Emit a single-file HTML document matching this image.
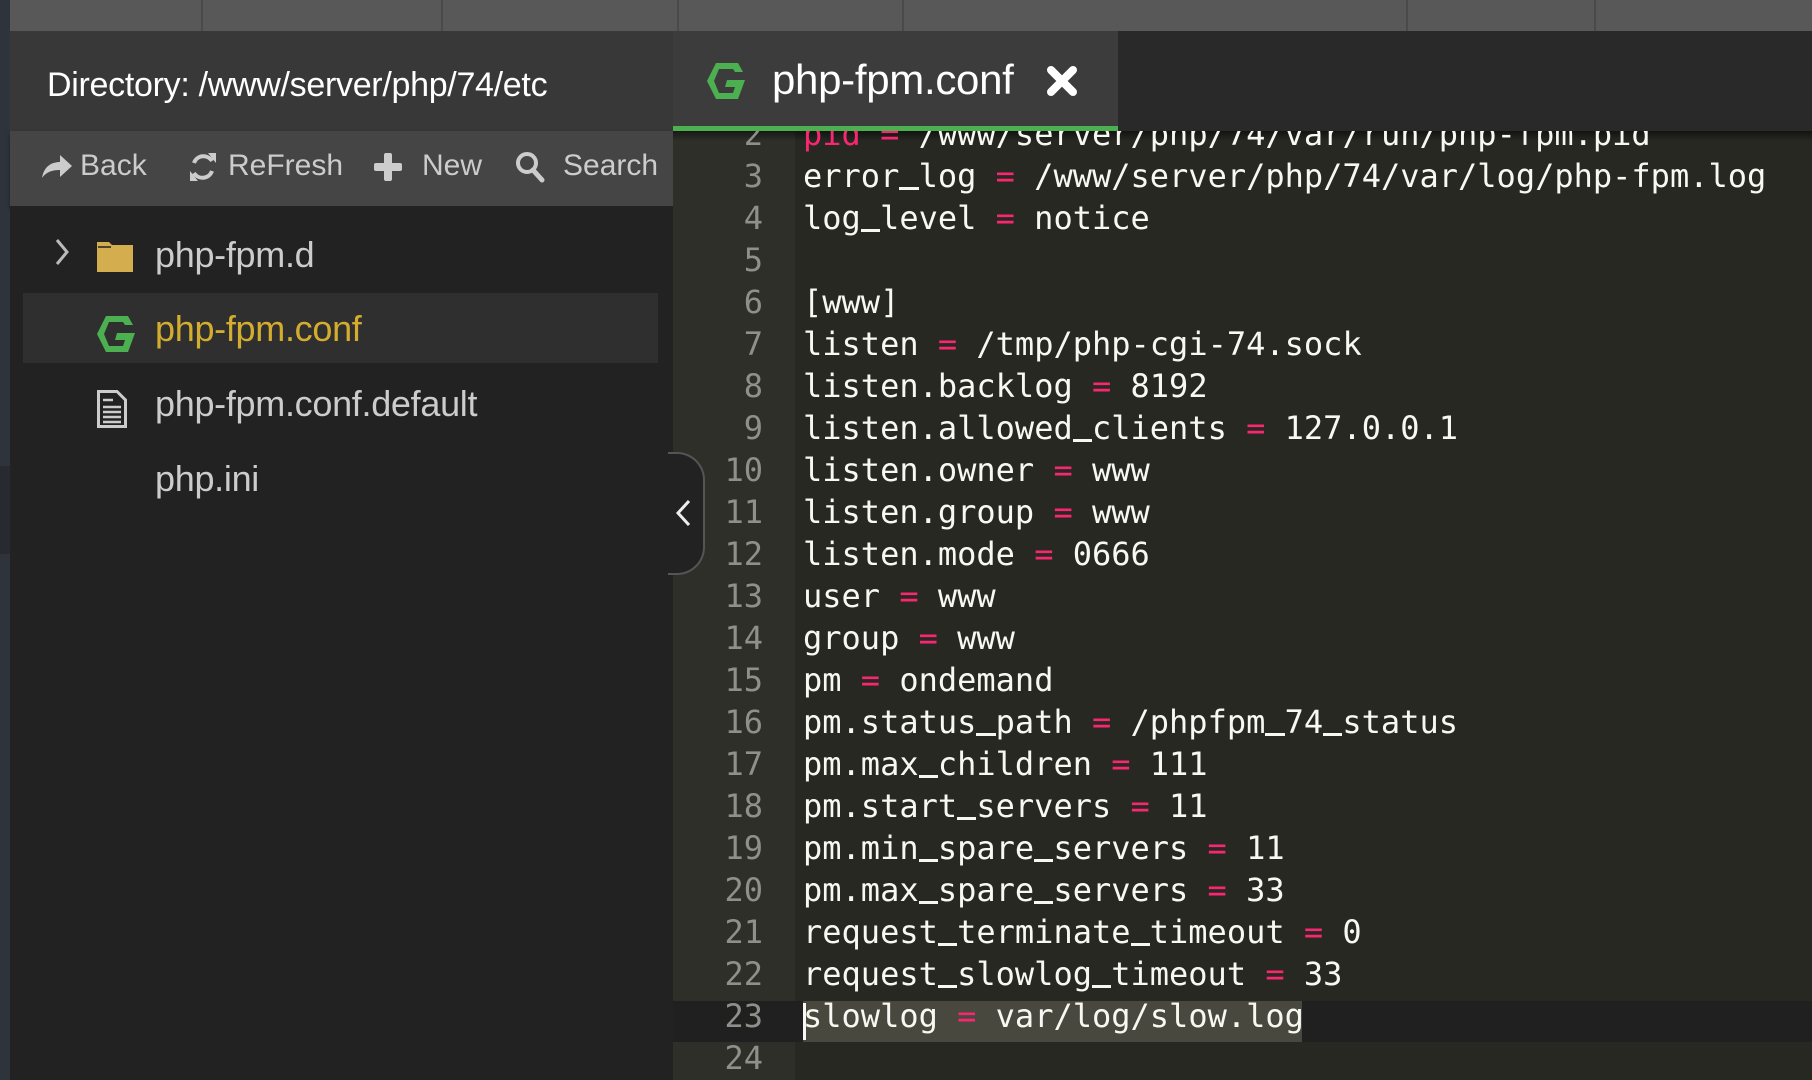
<!DOCTYPE html>
<html><head><meta charset="utf-8"><style>
*{margin:0;padding:0;box-sizing:border-box}
body{width:1812px;height:1080px;overflow:hidden;background:#222;position:relative;font-family:"Liberation Sans",sans-serif}
.abs{position:absolute}
.mono{font-family:"DejaVu Sans Mono","Liberation Mono",monospace}
.code div{height:42px;line-height:42px;white-space:pre;font-size:32px;color:#f8f8f2}
.gut div{height:42px;line-height:42px;font-size:32px;color:#8f908a;text-align:right}
.p{color:#f92672}
.u{display:inline-block;width:0.602em;height:42px;vertical-align:top;position:relative;color:transparent;overflow:hidden}
.u::after{content:"";position:absolute;left:0;right:0;top:32px;height:3px;background:#f8f8f2}
</style></head><body>
<!-- top bar -->
<div class="abs" style="left:0;top:0;width:1812px;height:31px;background:#585858"></div>
<div class="abs" style="left:0;top:0;width:10px;height:1080px;background:#2f333b"></div>
<div class="abs" style="left:0;top:466px;width:10px;height:88px;background:#272b31"></div>
<div class="abs" style="left:201px;top:0;width:2px;height:31px;background:#4a4a4a"></div>
<div class="abs" style="left:441px;top:0;width:2px;height:31px;background:#4a4a4a"></div>
<div class="abs" style="left:677px;top:0;width:2px;height:31px;background:#4a4a4a"></div>
<div class="abs" style="left:902px;top:0;width:2px;height:31px;background:#4a4a4a"></div>
<div class="abs" style="left:1406px;top:0;width:2px;height:31px;background:#4a4a4a"></div>
<div class="abs" style="left:1594px;top:0;width:2px;height:31px;background:#4a4a4a"></div>

<!-- left panel -->
<div class="abs" style="left:10px;top:31px;width:663px;height:100px;background:#383838"></div>
<div class="abs" style="left:47px;top:66px;font-size:34px;color:#fff;letter-spacing:-0.3px">Directory: /www/server/php/74/etc</div>
<div class="abs" style="left:10px;top:131px;width:663px;height:75px;background:#454545;box-shadow:0 3px 4px rgba(0,0,0,.4)"></div>
<div class="abs" style="left:10px;top:131px;width:663px;height:75px;color:#ccc;font-size:30px">
 <svg class="abs" style="left:32px;top:23px" width="30" height="26" viewBox="0 0 30 26"><path d="M0 24 C2 12 10 8 18 8 L18 1 L30 12 L18 23 L18 16 C10 16 4 18 0 24Z" fill="#ccc"/></svg>
 <div class="abs" style="left:70px;top:18px">Back</div>
 <svg class="abs" style="left:178px;top:20px" width="30" height="32" viewBox="0 0 30 32"><path d="M24 10 A10 10 0 0 0 6 12" stroke="#ccc" stroke-width="4" fill="none"/><path d="M20 2 L28 2 L28 12 Z" fill="#ccc"/><path d="M6 22 A10 10 0 0 0 24 20" stroke="#ccc" stroke-width="4" fill="none"/><path d="M10 30 L2 30 L2 20 Z" fill="#ccc"/></svg>
 <div class="abs" style="left:218px;top:18px">ReFresh</div>
 <svg class="abs" style="left:364px;top:22px" width="28" height="28"><rect x="10" y="0" width="8" height="28" rx="2" fill="#ccc"/><rect x="0" y="10" width="28" height="8" rx="2" fill="#ccc"/></svg>
 <div class="abs" style="left:412px;top:18px">New</div>
 <svg class="abs" style="left:505px;top:20px" width="30" height="32"><circle cx="12" cy="12" r="9" stroke="#ccc" stroke-width="4" fill="none"/><path d="M18 19 L27 29" stroke="#ccc" stroke-width="5" stroke-linecap="round"/></svg>
 <div class="abs" style="left:553px;top:18px">Search</div>
</div>
<div class="abs" style="left:10px;top:206px;width:663px;height:874px;background:#222"></div>
<svg class="abs" style="left:54px;top:238px" width="16" height="28"><path d="M3 2 L13 14 L3 26" stroke="#bbb" stroke-width="3" fill="none"/></svg>
<svg class="abs" style="left:97px;top:240px" width="36" height="32"><path d="M0 2 H12 L15 5 H36 V32 H0Z" fill="#d4ad4e"/><path d="M1 7 H14" stroke="#222" stroke-width="1.5"/></svg>
<div class="abs" style="left:155px;top:234px;font-size:36px;color:#ccc;letter-spacing:-0.3px">php-fpm.d</div>
<div class="abs" style="left:23px;top:293px;width:635px;height:70px;background:#2f2f2f"></div>
<svg class="abs" style="left:97px;top:316px" width="38" height="36" viewBox="0 0 38 36"><path d="M9 0 H31 L36 9 H28 L26 6 H12 L7 18 L12 30 H26 L28 24 H18 L20 17 H38 L31 36 H9 L0 18Z" fill="#4caf50"/></svg>
<div class="abs" style="left:155px;top:308px;font-size:36px;color:#d4ad2e;letter-spacing:-0.3px">php-fpm.conf</div>
<svg class="abs" style="left:97px;top:390px" width="30" height="38" viewBox="0 0 30 38"><path d="M1.5 1.5 H20 L28.5 10 V36.5 H1.5Z" stroke="#ccc" stroke-width="3" fill="none"/><path d="M6 10 H16 M6 17 H24 M6 22 H24 M6 27 H24 M6 32 H24" stroke="#ccc" stroke-width="2.5"/></svg>
<div class="abs" style="left:155px;top:383px;font-size:36px;color:#ccc;letter-spacing:-0.3px">php-fpm.conf.default</div>
<div class="abs" style="left:155px;top:458px;font-size:36px;color:#ccc;letter-spacing:-0.3px">php.ini</div>

<!-- editor tab bar -->
<div class="abs" style="left:673px;top:31px;width:1139px;height:100px;background:#292929"></div>
<div class="abs" style="left:673px;top:31px;width:445px;height:100px;background:#3c3c3c;border-bottom:5px solid #4caf50"></div>
<svg class="abs" style="left:707px;top:63px" width="38" height="36" viewBox="0 0 38 36"><path d="M9 0 H31 L36 9 H28 L26 6 H12 L7 18 L12 30 H26 L28 24 H18 L20 17 H38 L31 36 H9 L0 18Z" fill="#4caf50"/></svg>
<div class="abs" style="left:772px;top:56px;font-size:42px;color:#fff;letter-spacing:-0.3px">php-fpm.conf</div>
<svg class="abs" style="left:1046px;top:65px" width="32" height="32"><path d="M5 5 L27 27 M27 5 L5 27" stroke="#fff" stroke-width="8" stroke-linecap="round"/></svg>

<!-- editor body -->
<div class="abs" style="left:673px;top:131px;width:1139px;height:949px;background:#272822;overflow:hidden">
 <div class="abs" style="left:0;top:0;width:122px;height:949px;background:#2f2f2a"></div>
 <div class="abs" style="left:0;top:870px;width:1139px;height:41px;background:#202020"></div>
 <div class="abs" style="left:130px;top:870px;width:499px;height:41px;background:#49483e"></div>
 <div class="abs" style="left:130px;top:872px;width:3px;height:37px;background:#f8f8f0"></div>
 <div class="abs" style="left:0;top:0;width:1139px;height:10px;background:linear-gradient(rgba(0,0,0,.5),rgba(0,0,0,0))"></div>
 <div class="abs gut mono" style="left:0;top:-18px;width:90px">
 <div>2</div><div>3</div><div>4</div><div>5</div><div>6</div><div>7</div><div>8</div><div>9</div><div>10</div><div>11</div><div>12</div><div>13</div><div>14</div><div>15</div><div>16</div><div>17</div><div>18</div><div>19</div><div>20</div><div>21</div><div>22</div><div>23</div><div>24</div>
 </div>
 <div class="abs code mono" style="left:130px;top:-18px">
<div><span class="p">pid</span> <span class="p">=</span> /www/server/php/74/var/run/php-fpm.pid</div>
<div>error<span class="u">_</span>log <span class="p">=</span> /www/server/php/74/var/log/php-fpm.log</div>
<div>log<span class="u">_</span>level <span class="p">=</span> notice</div>
<div> </div>
<div>[www]</div>
<div>listen <span class="p">=</span> /tmp/php-cgi-74.sock</div>
<div>listen.backlog <span class="p">=</span> 8192</div>
<div>listen.allowed<span class="u">_</span>clients <span class="p">=</span> 127.0.0.1</div>
<div>listen.owner <span class="p">=</span> www</div>
<div>listen.group <span class="p">=</span> www</div>
<div>listen.mode <span class="p">=</span> 0666</div>
<div>user <span class="p">=</span> www</div>
<div>group <span class="p">=</span> www</div>
<div>pm <span class="p">=</span> ondemand</div>
<div>pm.status<span class="u">_</span>path <span class="p">=</span> /phpfpm<span class="u">_</span>74<span class="u">_</span>status</div>
<div>pm.max<span class="u">_</span>children <span class="p">=</span> 111</div>
<div>pm.start<span class="u">_</span>servers <span class="p">=</span> 11</div>
<div>pm.min<span class="u">_</span>spare<span class="u">_</span>servers <span class="p">=</span> 11</div>
<div>pm.max<span class="u">_</span>spare<span class="u">_</span>servers <span class="p">=</span> 33</div>
<div>request<span class="u">_</span>terminate<span class="u">_</span>timeout <span class="p">=</span> 0</div>
<div>request<span class="u">_</span>slowlog<span class="u">_</span>timeout <span class="p">=</span> 33</div>
<div>slowlog <span class="p">=</span> var/log/slow.log</div>
<div> </div>
 </div>
</div>

<!-- collapse button -->
<div class="abs" style="left:668px;top:452px;width:37px;height:123px;background:#222;border:2px solid #555;border-left:none;border-radius:0 28px 28px 0"></div>
<svg class="abs" style="left:674px;top:498px" width="20" height="30"><path d="M15 3 L4 15 L15 27" stroke="#eee" stroke-width="3" fill="none"/></svg>
</body></html>
